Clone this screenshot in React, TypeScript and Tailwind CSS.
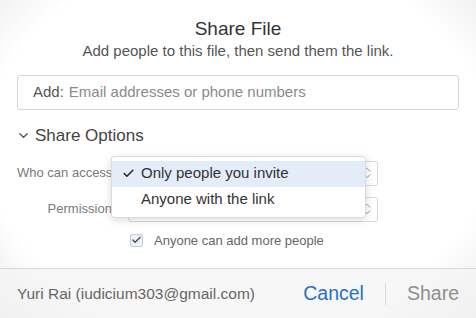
import { Check, ChevronDown, ChevronsUpDown } from 'lucide-react';

const font = { fontFamily: '"Liberation Sans", Arial, sans-serif' };

const SelectBox = ({ value }: { value: string }) => (
  <div className="flex h-[25px] w-[250px] items-center justify-between rounded-[3px] border border-[#d9d9d9] bg-white pl-[12px] pr-[3px] text-[14px] text-[#333]">
    <span>{value}</span>
    <ChevronsUpDown size={14} strokeWidth={1.5} className="text-[#888]" />
  </div>
);

const App = () => {
  return (
    <div
      style={font}
      className="relative flex h-[318px] w-[476px] flex-col overflow-hidden bg-[radial-gradient(ellipse_75%_85%_at_50%_45%,#ffffff_70%,#e4e4e4_100%)]"
    >
      <div className="flex flex-col items-center pt-[17px]">
        <p className="text-[19px] leading-[24px] text-[#333]">Share File</p>
        <p className="mt-[1px] text-[15px] leading-[18px] text-[#555]">
          Add people to this file, then send them the link.
        </p>
      </div>

      <div className="mx-[17px] mt-[15px] flex h-[35px] items-center rounded-[3px] border border-[#d6d6d6] bg-white px-[15px] text-[15px]">
        <span className="text-[#555]">Add:</span>
        <span className="ml-[5px] text-[#8a8a8a]">Email addresses or phone numbers</span>
      </div>

      <div className="ml-[16px] mt-[13px] flex items-center gap-[4px] text-[17px] text-[#444]">
        <ChevronDown size={15} strokeWidth={2.2} className="text-[#444]" />
        <span>Share Options</span>
      </div>

      <div className="relative mt-[12px] flex flex-col gap-[11px] text-[13px] text-[#7a7a7a]">
        <div className="flex items-center">
          <span className="w-[128px] pr-[12px] text-right">Who can access:</span>
          <SelectBox value="Only people you invite" />
        </div>
        <div className="flex items-center">
          <span className="w-[128px] pr-[6px] text-right">Permissions:</span>
          <SelectBox value="Can make changes" />
        </div>
        <div className="-mt-[2px] ml-[130px] flex items-center gap-[11px]">
          <div className="flex h-[13px] w-[13px] items-center justify-center rounded-[2px] border border-[#c9cdd3] bg-[#eef1f5]">
            <Check size={12} strokeWidth={2.6} className="text-[#3d4a5c]" />
          </div>
          <span className="text-[#666]">Anyone can add more people</span>
        </div>

        {/* open dropdown menu */}
        <div className="absolute left-[111px] top-[-5px] w-[255px] rounded-[3px] border border-[#dcdcdc] bg-white py-[4px] text-[15px] text-[#333] shadow-[0_2px_8px_rgba(0,0,0,0.15)]">
          <div className="flex h-[26px] items-center bg-[#e3edf9] pl-[10px]">
            <Check size={13} strokeWidth={2.8} className="text-[#222]" />
            <span className="ml-[6px]">Only people you invite</span>
          </div>
          <div className="flex h-[26px] items-center pl-[29px]">Anyone with the link</div>
        </div>
      </div>

      <div className="mt-auto flex h-[50px] items-center border-t border-[#d8d8d8] bg-[#f3f3f3]/70 pl-[17px] pr-[17px]">
        <span className="text-[15.5px] text-[#666]">Yuri Rai (iudicium303@gmail.com)</span>
        <span className="ml-auto text-[19.5px] text-[#2a6fc4]">Cancel</span>
        <span className="mx-[21px] h-[22px] w-px bg-[#dadada]" />
        <span className="text-[19.5px] text-[#8f8f8f]">Share</span>
      </div>
    </div>
  );
};

export default App;
